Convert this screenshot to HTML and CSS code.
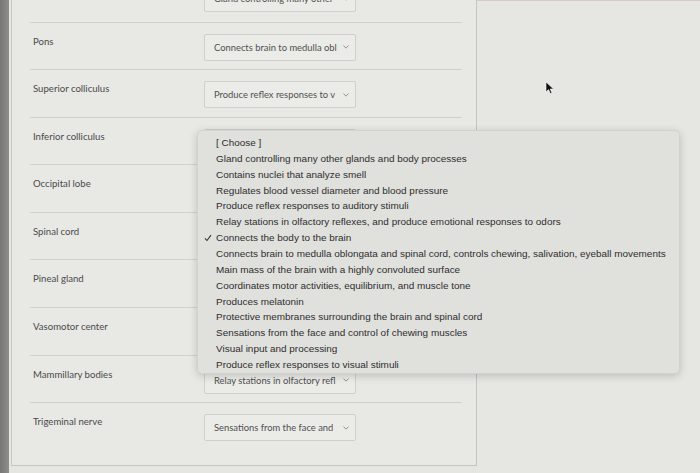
FILE: index.html
```html
<!DOCTYPE html>
<html>
<head>
<meta charset="utf-8">
<link rel="stylesheet" href="styles.css">
</head>
<body>
<div class="screen">
  <div class="strip"></div>
  <div class="panel">
    <div class="rows">
      <div class="row first"><div class="label"></div><div class="select"><span>Gland controlling many other</span><svg class="chev" viewBox="0 0 6 4"><polyline points="0.5,0.5 3,3.2 5.5,0.5"/></svg></div></div>
      <div class="row"><div class="label">Pons</div><div class="select"><span>Connects brain to medulla obl</span><svg class="chev" viewBox="0 0 6 4"><polyline points="0.5,0.5 3,3.2 5.5,0.5"/></svg></div></div>
      <div class="row"><div class="label">Superior colliculus</div><div class="select"><span>Produce reflex responses to v</span><svg class="chev" viewBox="0 0 6 4"><polyline points="0.5,0.5 3,3.2 5.5,0.5"/></svg></div></div>
      <div class="row"><div class="label">Inferior colliculus</div><div class="select"><span></span><svg class="chev" viewBox="0 0 6 4"><polyline points="0.5,0.5 3,3.2 5.5,0.5"/></svg></div></div>
      <div class="row"><div class="label">Occipital lobe</div><div class="select"><span></span><svg class="chev" viewBox="0 0 6 4"><polyline points="0.5,0.5 3,3.2 5.5,0.5"/></svg></div></div>
      <div class="row"><div class="label">Spinal cord</div><div class="select"><span></span><svg class="chev" viewBox="0 0 6 4"><polyline points="0.5,0.5 3,3.2 5.5,0.5"/></svg></div></div>
      <div class="row"><div class="label">Pineal gland</div><div class="select"><span></span><svg class="chev" viewBox="0 0 6 4"><polyline points="0.5,0.5 3,3.2 5.5,0.5"/></svg></div></div>
      <div class="row"><div class="label">Vasomotor center</div><div class="select"><span></span><svg class="chev" viewBox="0 0 6 4"><polyline points="0.5,0.5 3,3.2 5.5,0.5"/></svg></div></div>
      <div class="row"><div class="label">Mammillary bodies</div><div class="select"><span>Relay stations in olfactory refl</span><svg class="chev" viewBox="0 0 6 4"><polyline points="0.5,0.5 3,3.2 5.5,0.5"/></svg></div></div>
      <div class="row last"><div class="label">Trigeminal nerve</div><div class="select"><span>Sensations from the face and</span><svg class="chev" viewBox="0 0 6 4"><polyline points="0.5,0.5 3,3.2 5.5,0.5"/></svg></div></div>
    </div>
  </div>
  <div class="right"></div>
</div>

<div class="dropdown">
  <div class="opt">[ Choose ]</div>
  <div class="opt">Gland controlling many other glands and body processes</div>
  <div class="opt">Contains nuclei that analyze smell</div>
  <div class="opt">Regulates blood vessel diameter and blood pressure</div>
  <div class="opt">Produce reflex responses to auditory stimuli</div>
  <div class="opt">Relay stations in olfactory reflexes, and produce emotional responses to odors</div>
  <div class="opt checked"><svg class="check" viewBox="0 0 8 8"><polyline points="1,4.3 3,6.5 7,1.2"/></svg>Connects the body to the brain</div>
  <div class="opt">Connects brain to medulla oblongata and spinal cord, controls chewing, salivation, eyeball movements</div>
  <div class="opt">Main mass of the brain with a highly convoluted surface</div>
  <div class="opt">Coordinates motor activities, equilibrium, and muscle tone</div>
  <div class="opt">Produces melatonin</div>
  <div class="opt">Protective membranes surrounding the brain and spinal cord</div>
  <div class="opt">Sensations from the face and control of chewing muscles</div>
  <div class="opt">Visual input and processing</div>
  <div class="opt">Produce reflex responses to visual stimuli</div>
</div>

<svg class="cursor" viewBox="0 0 10 14"><path d="M1 1 L1 11 L3.5 8.6 L5.3 12.6 L6.9 11.9 L5.2 8 L8.6 8 Z"/></svg>
</body>
</html>
```

FILE: styles.css
```css
html, body {
  margin: 0;
  padding: 0;
}
body {
  width: 700px;
  height: 473px;
  overflow: hidden;
  background: #e5e5e2;
  position: relative;
  font-family: Lato, "Liberation Sans", sans-serif;
}
.screen {
  display: flex;
  height: 473px;
}
.strip {
  width: 9px;
  flex: none;
  background: linear-gradient(90deg, #767674, #8e8e8c);
}
.panel {
  flex: none;
  margin-left: 2px;
  width: 466px;
  height: 466px;
  box-sizing: border-box;
  border-left: 1px solid #c9c9c6;
  border-right: 1px solid #c4c4c1;
  border-bottom: 1px solid #c4c4c1;
  background: #e8e8e5;
  overflow: hidden;
}
.right {
  flex: 1;
  background: #e6e6e3;
  border-top: 1px solid #dcc8c8;
}
.rows {
  margin-top: -26px;
  padding: 0 14px 0 18px;
}
.row {
  display: flex;
  height: 47.6px;
  box-sizing: border-box;
  border-top: 1px solid #d0d0cd;
}
.row.first {
  border-top: none;
  height: 47.5px;
}
.label {
  width: 174px;
  flex: none;
  box-sizing: border-box;
  padding: 13px 0 0 3px;
  font-size: 9.6px;
  line-height: 11px;
  color: #4a4a4a;
}
.select {
  margin-top: 11px;
  width: 152px;
  height: 27px;
  box-sizing: border-box;
  border: 1px solid #cfcfcc;
  border-radius: 2px;
  background: #ebebe8;
  display: flex;
  align-items: center;
  justify-content: space-between;
  padding: 0 6px 0 9px;
  font-size: 9.4px;
  color: #505050;
  white-space: nowrap;
  overflow: hidden;
}
.select span {
  overflow: hidden;
}
.chev {
  width: 6px;
  height: 4px;
  flex: none;
  fill: none;
  stroke: #8a8a8a;
  stroke-width: 0.9;
}
.dropdown {
  position: absolute;
  left: 197px;
  top: 130px;
  width: 483px;
  height: 244px;
  box-sizing: border-box;
  padding: 4px 0 0 18px;
  background: #e0e0dd;
  border: 1px solid #d2d2cf;
  border-radius: 5px;
  box-shadow: 0 2px 8px rgba(0, 0, 0, 0.18);
  font-family: "Liberation Sans", Arial, sans-serif;
  font-size: 9.95px;
  color: #2e2e2e;
}
.opt {
  height: 15.86px;
  line-height: 15.86px;
  white-space: nowrap;
  position: relative;
}
.check {
  position: absolute;
  left: -12px;
  top: 4px;
  width: 8px;
  height: 8px;
  fill: none;
  stroke: #333;
  stroke-width: 1.1;
}
.cursor {
  position: absolute;
  left: 545px;
  top: 81px;
  width: 10px;
  height: 14px;
  fill: #111;
  stroke: #fff;
  stroke-width: 0.6;
}
```
